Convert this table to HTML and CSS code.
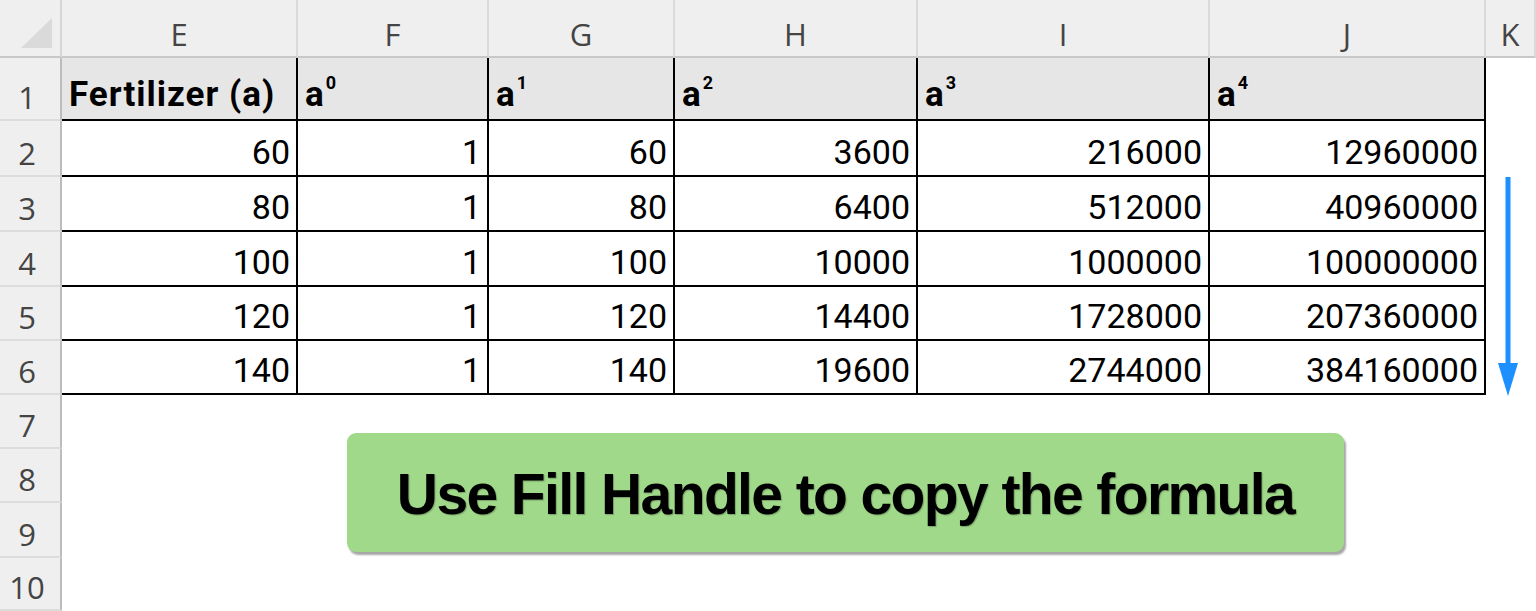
FILE: index.html
```html
<!DOCTYPE html>
<html>
<head>
<meta charset="utf-8">
<link rel="stylesheet" href="styles.css">
</head>
<body>
<div class="sheet">
  <div class="corner"><span class="tri"></span></div>
  <div class="colhead">E</div>
  <div class="colhead">F</div>
  <div class="colhead">G</div>
  <div class="colhead">H</div>
  <div class="colhead">I</div>
  <div class="colhead">J</div>
  <div class="colhead">K</div>

  <div class="rowhead">1</div>
  <div class="cell hdr"><span class="label">Fertilizer (a)</span></div>
  <div class="cell hdr"><span>a<sup>0</sup></span></div>
  <div class="cell hdr"><span>a<sup>1</sup></span></div>
  <div class="cell hdr"><span>a<sup>2</sup></span></div>
  <div class="cell hdr"><span>a<sup>3</sup></span></div>
  <div class="cell hdr"><span>a<sup>4</sup></span></div>
  <div class="blank"></div>

  <div class="rowhead">2</div>
  <div class="cell num">60</div>
  <div class="cell num">1</div>
  <div class="cell num">60</div>
  <div class="cell num">3600</div>
  <div class="cell num">216000</div>
  <div class="cell num">12960000</div>
  <div class="blank"></div>

  <div class="rowhead">3</div>
  <div class="cell num">80</div>
  <div class="cell num">1</div>
  <div class="cell num">80</div>
  <div class="cell num">6400</div>
  <div class="cell num">512000</div>
  <div class="cell num">40960000</div>
  <div class="blank"></div>

  <div class="rowhead">4</div>
  <div class="cell num">100</div>
  <div class="cell num">1</div>
  <div class="cell num">100</div>
  <div class="cell num">10000</div>
  <div class="cell num">1000000</div>
  <div class="cell num">100000000</div>
  <div class="blank"></div>

  <div class="rowhead">5</div>
  <div class="cell num">120</div>
  <div class="cell num">1</div>
  <div class="cell num">120</div>
  <div class="cell num">14400</div>
  <div class="cell num">1728000</div>
  <div class="cell num">207360000</div>
  <div class="blank"></div>

  <div class="rowhead">6</div>
  <div class="cell num">140</div>
  <div class="cell num">1</div>
  <div class="cell num">140</div>
  <div class="cell num">19600</div>
  <div class="cell num">2744000</div>
  <div class="cell num">384160000</div>
  <div class="blank"></div>

  <div class="rowhead">7</div>
  <div class="blank wide"></div>
  <div class="rowhead">8</div>
  <div class="blank wide"></div>
  <div class="rowhead">9</div>
  <div class="blank wide"></div>
  <div class="rowhead">10</div>
  <div class="blank wide"></div>

  <svg class="arrow" width="22" height="220" viewBox="0 0 22 220">
    <rect x="8.5" y="0" width="5" height="190" fill="#1e8fff"/>
    <polygon points="1,186 21,186 11,219" fill="#1e8fff"/>
  </svg>

  <div class="note">Use Fill Handle to copy the formula</div>
</div>
</body>
</html>
```

FILE: styles.css
```css
html, body {
  margin: 0;
  padding: 0;
  background: #fff;
}

.sheet {
  position: relative;
  width: 1536px;
  height: 611px;
  overflow: hidden;
  display: grid;
  grid-template-columns: 62px 236px 191px 186px 243px 292px 276px 50px;
  grid-template-rows: 58px 63px 56px 55px 55px 54px 54px 54px 54px 55px 53px;
  background: #fff;
}

.corner {
  background: #efefef;
  border-right: 2px solid #d6d6d6;
  border-bottom: 2px solid #c8c8c8;
  box-sizing: border-box;
  display: flex;
  align-items: flex-end;
  justify-content: flex-end;
  padding: 0 8px 8px 0;
}

.tri {
  width: 0;
  height: 0;
  border-left: 31px solid transparent;
  border-bottom: 30px solid #dadada;
}

.colhead {
  background: #efefef;
  border-right: 2px solid #dadada;
  border-bottom: 2px solid #c8c8c8;
  box-sizing: border-box;
  display: flex;
  align-items: flex-end;
  justify-content: center;
  padding-bottom: 6px;
  font-family: "Open Sans", "DejaVu Sans", sans-serif;
  font-size: 31px;
  line-height: 31px;
  color: #444;
}

.rowhead {
  background: #efefef;
  border-right: 2px solid #bcbcbc;
  border-bottom: 2px solid #dcdcdc;
  box-sizing: border-box;
  display: flex;
  align-items: flex-end;
  justify-content: center;
  padding: 0 6px 6px 0;
  font-family: "Open Sans", "DejaVu Sans", sans-serif;
  font-size: 31px;
  line-height: 31px;
  color: #444;
}

.cell {
  box-sizing: border-box;
  border-right: 2px solid #000;
  border-bottom: 2px solid #000;
  display: flex;
  align-items: flex-end;
  padding-bottom: 6px;
  font-family: "Roboto", "Liberation Sans", sans-serif;
  font-size: 34px;
  line-height: 34px;
  color: #000;
  white-space: nowrap;
}

.hdr {
  background: #e7e6e6;
  font-weight: 700;
  font-size: 35px;
  line-height: 35px;
  padding-left: 7px;
  padding-bottom: 7px;
}

.label {
  letter-spacing: 1px;
}

.hdr sup {
  font-size: 18px;
  line-height: 0;
  vertical-align: 17px;
  margin-left: 2px;
  font-weight: 700;
}

.num {
  justify-content: flex-end;
  padding-right: 6px;
}

.blank {
  background: #fff;
}

.wide {
  grid-column: 2 / -1;
}

.arrow {
  position: absolute;
  left: 1497px;
  top: 177px;
}

.note {
  position: absolute;
  left: 347px;
  top: 433px;
  width: 997px;
  height: 119px;
  box-sizing: border-box;
  background: #a0d98a;
  border-radius: 9px;
  box-shadow: 2px 3px 2px rgba(0, 0, 0, 0.35);
  display: flex;
  align-items: center;
  justify-content: center;
  font-family: "Liberation Sans", Arial, sans-serif;
  font-weight: 700;
  font-size: 57px;
  letter-spacing: -1.6px;
  color: #000;
  text-shadow: 1px 1px 1px rgba(0, 0, 0, 0.25);
  padding-top: 2px;
}
```
